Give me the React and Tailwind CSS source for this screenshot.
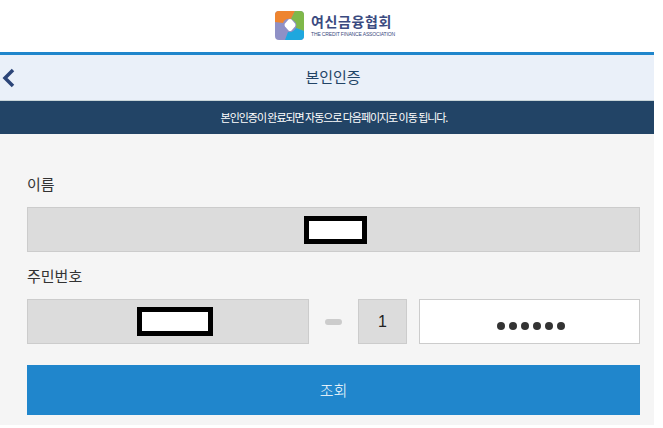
const sans = { fontFamily: '"Noto Sans CJK KR", sans-serif' };

function Logo() {
  return (
    <div className="flex items-center gap-[7px] ml-[16px]">
      <svg width="29" height="29" viewBox="0 0 29 29">
        <rect width="29" height="29" rx="4" fill="#8f90c6" />
        <path d="M4 0H20L16 8Q10 7 8 12L0 11V4Q0 0 4 0Z" fill="#ee842f" />
        <path d="M20 0H25Q29 0 29 4V20L21 17Q23 11 16 8Z" fill="#7fb84a" />
        <path d="M29 20V25Q29 29 25 29H10L13 21Q18 22 21 17Z" fill="#1ea7de" />
        <path d="M13.500 8.500Q15 7.500 16.500 8.500L20 12.500Q21 14 20 15.500L16.500 19.500Q15 20.500 13.500 19.500L10 15.500Q9 14 10 12.500Z" fill="#ffffff" />
      </svg>
      <div className="flex flex-col items-start -mt-[1px]">
        <span className="text-[14px] leading-[19px] font-bold text-[#3a4a80] tracking-[0.6px]">여신금융협회</span>
        <span className="text-[5px] leading-[6px] text-[#3a4a80] font-['Liberation_Sans'] whitespace-nowrap tracking-[-0.14px]">THE CREDIT FINANCE ASSOCIATION</span>
      </div>
    </div>
  );
}

function App() {
  return (
    <div className="w-[663px] h-[428px] bg-white overflow-hidden" style={sans}>
      <div className="w-[654px] h-[425px] bg-[#f5f5f5] flex flex-col">
        <header className="h-[52px] bg-white flex items-center justify-center pb-[2px]">
          <Logo />
        </header>
        <nav className="h-[49px] bg-[#eaf0f9] border-t-[3px] border-[#2086cc] border-b border-b-[#c8d4d8] flex items-center relative">
          <svg className="absolute left-[2px] top-[13px]" width="13" height="20" viewBox="0 0 13 20">
            <path d="M11 2L3 10L11 18" fill="none" stroke="#2c4578" strokeWidth="3.500" />
          </svg>
          <span className="w-full text-center text-[15px] text-[#224466] pl-[12px]">본인인증</span>
        </nav>
        <div className="h-[33px] bg-[#224466] flex items-center justify-center text-[11px] text-white tracking-[-1.05px] pl-[14px]">
          본인인증이 완료되면 자동으로 다음페이지로 이동 됩니다.
        </div>
        <main className="pl-[27px] pr-[14px] flex flex-col text-[#333333]">
          <label className="mt-[37px] h-[25px] text-[15px] leading-[25px]">이름</label>
          <div className="mt-[11px] h-[45px] bg-[#dcdcdc] border border-[#cccccc] flex items-center justify-center">
            <div className="w-[63px] h-[28px] bg-white border-[5px] border-black ml-[4px]" />
          </div>
          <label className="mt-[11px] h-[25px] text-[15px] leading-[25px]">주민번호</label>
          <div className="mt-[11px] flex items-center">
            <div className="w-[282px] h-[45px] bg-[#dcdcdc] border border-[#cccccc] flex items-center justify-center">
              <div className="w-[76px] h-[29px] bg-white border-[5px] border-black ml-[14px]" />
            </div>
            <div className="w-[17px] h-[6px] rounded-full bg-[#cccccc] ml-[16px]" />
            <div className="ml-[16px] w-[49px] h-[45px] bg-[#dcdcdc] border border-[#cccccc] flex items-center justify-center">
              <span className="text-[16px] font-['Liberation_Sans'] text-[#222222]">1</span>
            </div>
            <div className="ml-[12px] w-[221px] h-[45px] bg-white border border-[#cccccc] flex items-center justify-center gap-[4px] pt-[8px] pl-[3px]">
              {[0, 1, 2, 3, 4, 5].map((i) => (
                <span key={i} className="w-[8px] h-[8px] rounded-full bg-[#333333]" />
              ))}
            </div>
          </div>
          <button className="mt-[21px] h-[50px] bg-[#2086cc] text-white text-[15px] font-light">조회</button>
        </main>
      </div>
    </div>
  );
}

export default App;
